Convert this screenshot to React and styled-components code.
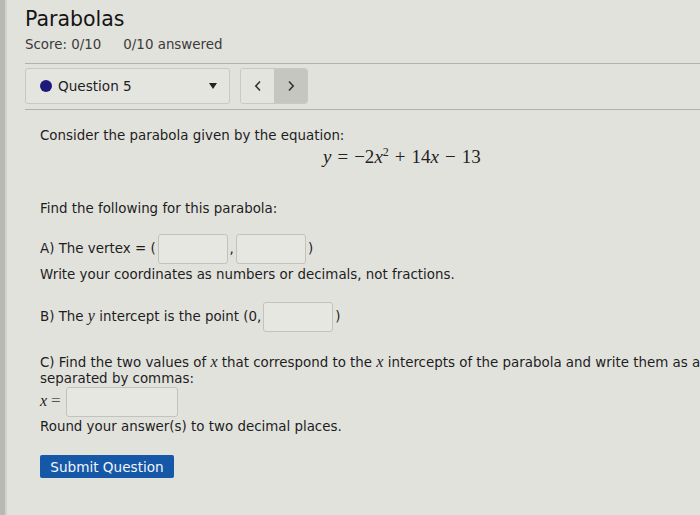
import React from 'react'
import styled, { createGlobalStyle } from 'styled-components'

const GlobalStyle = createGlobalStyle`
  html, body {
    margin: 0;
    padding: 0;
    background: #e2e2dd;
  }
  body {
    font-family: "DejaVu Sans", Verdana, sans-serif;
    color: #1d1d1d;
  }
`

const Page = styled.main`
  height: 515px;
  overflow: hidden;
  border-left: 5px solid #b9b9b4;
  box-shadow: inset 2px 0 0 #d2d2cd;
  padding-left: 20px;
`

const Title = styled.h1`
  margin: 0;
  padding-top: 6px;
  font-size: 20.5px;
  font-weight: 500;
  line-height: 26px;
  color: #151515;
`

const ScoreRow = styled.div`
  display: flex;
  gap: 22px;
  margin-top: 3px;
  font-size: 13.4px;
  line-height: 20px;
  color: #3a3a3a;
`

const Toolbar = styled.div`
  display: flex;
  align-items: center;
  margin-top: 8px;
  padding: 4px 0 5px;
  border-top: 1px solid #b2b2ad;
  border-bottom: 1px solid #b2b2ad;
`

const QuestionSelect = styled.div`
  display: flex;
  align-items: center;
  width: 205px;
  height: 36px;
  box-sizing: border-box;
  padding: 0 12px 0 14px;
  border: 1px solid #c9c9c4;
  border-radius: 3px;
  background: #e5e5e0;
  font-size: 13.6px;
`

const Dot = styled.span`
  width: 12px;
  height: 12px;
  border-radius: 50%;
  background: #1d1a7a;
  margin-right: 6px;
`

const Caret = styled.span`
  margin-left: auto;
  width: 0;
  height: 0;
  border-left: 4px solid transparent;
  border-right: 4px solid transparent;
  border-top: 6px solid #222;
`

const NavGroup = styled.div`
  display: flex;
  margin-left: 10px;
  border: 1px solid #c9c9c4;
  border-radius: 3px;
  overflow: hidden;
`

const NavButton = styled.button`
  width: 33px;
  height: 34px;
  border: 0;
  padding: 0;
  display: flex;
  align-items: center;
  justify-content: center;
  background: ${p => (p.$active ? '#c6c6c1' : '#e4e4df')};
  color: #333;
`

const Body = styled.section`
  padding: 16px 0 0 15px;
  font-size: 13.4px;
  line-height: 20px;
`

const Para = styled.p`
  margin: ${p => p.$mt || 0}px 0 0;
  line-height: ${p => p.$lh || 20}px;
  white-space: nowrap;
`

const Equation = styled.div`
  margin: 0 0 0 283px;
  font-family: "Liberation Serif", "DejaVu Serif", serif;
  font-size: 19px;
  line-height: 22px;
  color: #222;
  i {
    font-style: italic;
  }
  sup {
    font-size: 12px;
    line-height: 0;
  }
`

const Op = styled.span`
  margin: 0 6px;
`

const Line = styled.div`
  margin-top: ${p => p.$mt || 0}px;
  line-height: 30px;
  height: 30px;
  white-space: nowrap;
`

const Answer = styled.span`
  display: inline-block;
  vertical-align: middle;
  width: ${p => p.$w || 70}px;
  height: 30px;
  box-sizing: border-box;
  border: 1px solid #c3c3be;
  border-radius: 3px;
  background: #e7e7e2;
  margin: 0 2px;
`

const MathVar = styled.i`
  font-family: "Liberation Serif", "DejaVu Serif", serif;
  font-size: 16px;
`

const Equals = styled.span`
  font-family: "Liberation Serif", "DejaVu Serif", serif;
  font-size: 17px;
  margin: 0 3px 0 4px;
  color: #555;
`

const SubmitButton = styled.button`
  display: block;
  margin-top: 17px;
  width: 134px;
  height: 23px;
  border: 0;
  border-radius: 2px;
  background: #1658a8;
  color: #f2f5fa;
  font-family: "DejaVu Sans", Verdana, sans-serif;
  font-size: 13.6px;
  padding: 0;
`

const Chevron = ({ dir }) => (
  <svg width="8" height="12" viewBox="0 0 8 12">
    <path
      d={dir === 'left' ? 'M6 1.5 1.8 6 6 10.5' : 'M2 1.5 6.2 6 2 10.5'}
      fill="none"
      stroke="#333"
      strokeWidth="1.6"
    />
  </svg>
)

const App = () => (
  <>
    <GlobalStyle />
    <Page>
      <Title>Parabolas</Title>
      <ScoreRow>
        <span>Score: 0/10</span>
        <span>0/10 answered</span>
      </ScoreRow>
      <Toolbar>
        <QuestionSelect>
          <Dot />
          Question 5
          <Caret />
        </QuestionSelect>
        <NavGroup>
          <NavButton><Chevron dir="left" /></NavButton>
          <NavButton $active><Chevron dir="right" /></NavButton>
        </NavGroup>
      </Toolbar>
      <Body>
        <Para>Consider the parabola given by the equation:</Para>
        <Equation>
          <i>y</i><Op>=</Op>−2<i>x</i><sup>2</sup><Op>+</Op>14<i>x</i><Op>−</Op>13
        </Equation>
        <Para $mt={31}>Find the following for this parabola:</Para>
        <Line $mt={15}>
          A) The vertex = (<Answer />,<Answer />)
        </Line>
        <Para $lh={22}>Write your coordinates as numbers or decimals, not fractions.</Para>
        <Line $mt={15}>
          B) The <MathVar>y</MathVar> intercept is the point (0,<Answer />)
        </Line>
        <Para $mt={23} $lh={16}>
          C) Find the two values of <MathVar>x</MathVar> that correspond to the <MathVar>x</MathVar> intercepts of the parabola and write them as a list,
          <br />
          separated by commas:
        </Para>
        <Line $mt={-1}>
          <MathVar>x</MathVar><Equals>=</Equals><Answer $w={112} />
        </Line>
        <Para $lh={22}>Round your answer(s) to two decimal places.</Para>
        <SubmitButton>Submit Question</SubmitButton>
      </Body>
    </Page>
  </>
)

export default App
